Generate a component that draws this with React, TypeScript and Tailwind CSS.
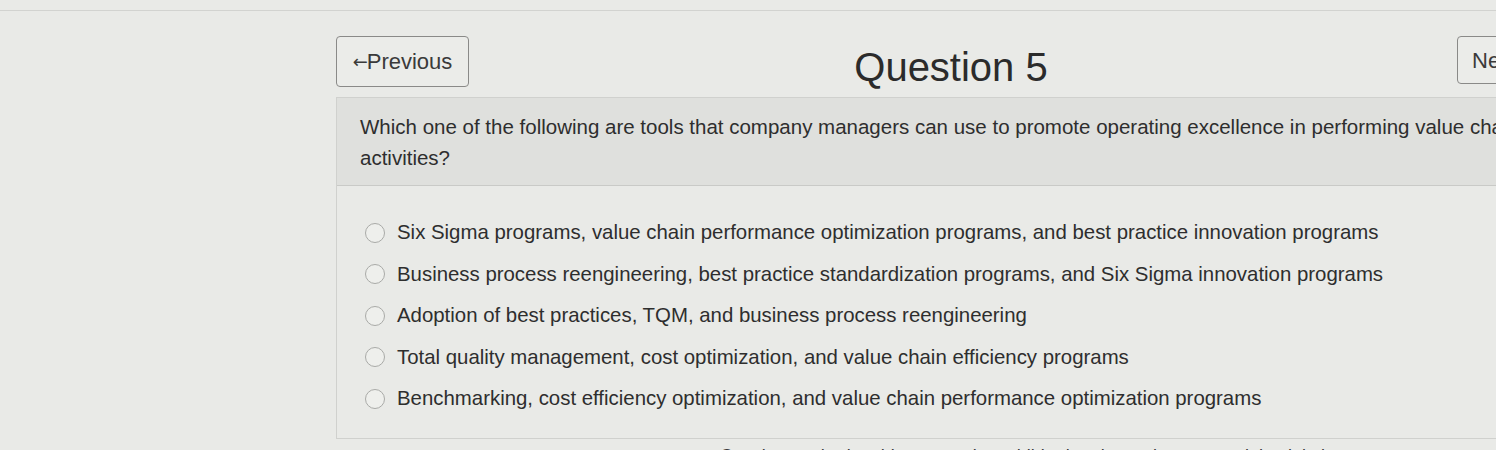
const options = [
  "Six Sigma programs, value chain performance optimization programs, and best practice innovation programs",
  "Business process reengineering, best practice standardization programs, and Six Sigma innovation programs",
  "Adoption of best practices, TQM, and business process reengineering",
  "Total quality management, cost optimization, and value chain efficiency programs",
  "Benchmarking, cost efficiency optimization, and value chain performance optimization programs",
];

export default function App() {
  return (
    <div
      className="w-[1496px] h-[450px] overflow-hidden bg-[#e9eae7] text-[#2e2e2e]"
      style={{ fontFamily: "'Liberation Sans', Arial, sans-serif" }}
    >
      <div className="h-[11px] border-b border-[#d2d3d0]" />

      <div className="ml-[336px] w-[1230px]">
        {/* header row */}
        <div className="grid grid-cols-[1fr_auto_1fr] items-start pt-[25px] h-[86px]">
          <button className="justify-self-start h-[51px] w-[133px] rounded-[4px] border border-[#8a8a88] bg-[#ebece9] text-[22px] text-[#3a3a3a] flex items-center justify-center">
            <span className="font-['DejaVu_Sans'] text-[18px] -mr-[1px]">←</span>Previous
          </button>
          <h1 className="text-[40px] leading-none text-[#2b2b2b] mt-[11px]">Question 5</h1>
          <button className="justify-self-end mr-[-2px] h-[48px] w-[111px] rounded-[4px] border border-[#8a8a88] bg-[#ebece9] text-[22px] text-[#3a3a3a] flex items-center justify-start pl-[14px]">
            Next<span className="font-['DejaVu_Sans'] text-[18px]">→</span>
          </button>
        </div>

        {/* question panel */}
        <div className="border border-[#d0d1ce]">
          <div className="bg-[#dfe0dd] border-b border-[#c9cac7] pl-[23px] pr-[10px] pt-[13px] pb-[12px] text-[20.5px] leading-[31px] text-[#2e2e2e]">
            Which one of the following are tools that company managers can use to promote operating excellence in performing value chain
            activities?
          </div>
          <div className="pt-[26px] pb-[18px] pl-[28px] flex flex-col">
            {options.map((o) => (
              <label key={o} className="flex items-center gap-[12px] h-[41.5px] text-[20.4px] text-[#2e2e2e]">
                <span className="w-[20px] h-[20px] rounded-full border-[1.5px] border-[#a9aaa7] bg-[#eeefec] shrink-0" />
                {o}
              </label>
            ))}
          </div>
        </div>

        <div className="flex justify-end pr-[216px] pt-[4px] text-[18px] text-[#3a3a3a] whitespace-nowrap">
          Copying or sharing this content is prohibited and constitutes copyright violation.
        </div>
      </div>
    </div>
  );
}
